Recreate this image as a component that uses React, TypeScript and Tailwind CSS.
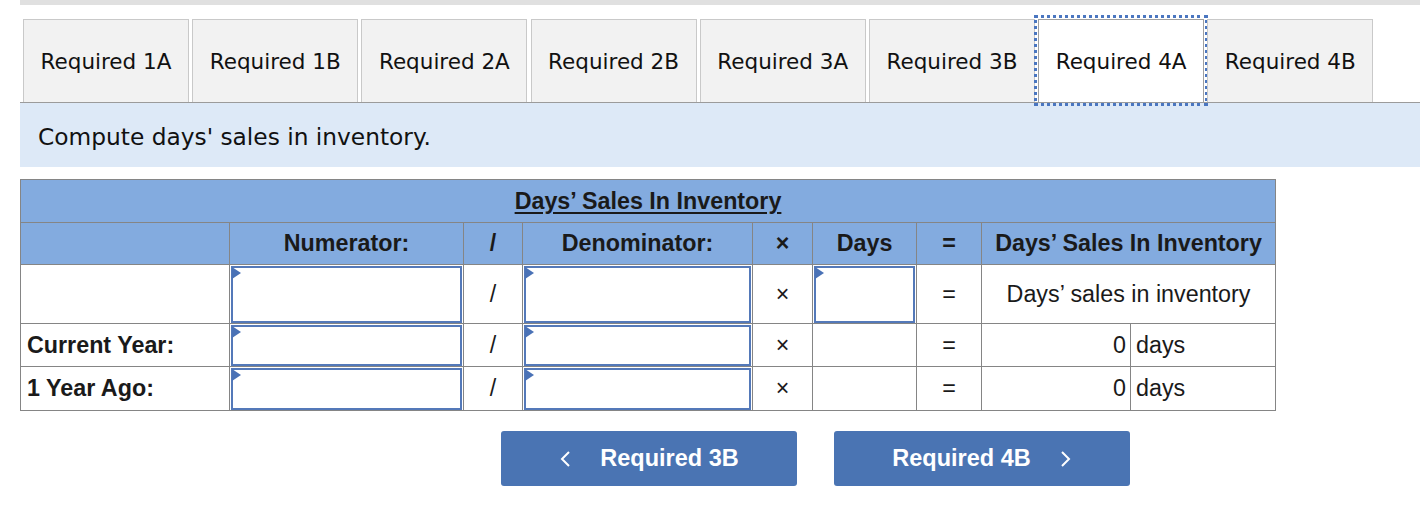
import { Fragment } from "react"

const tabs = [
    "Required 1A",
    "Required 1B",
    "Required 2A",
    "Required 2B",
    "Required 3A",
    "Required 3B",
    "Required 4A",
    "Required 4B",
]

const activeTab = "Required 4A"

function AnswerBox({ height }: { height: string }) {
    return (
        <div className={`relative mx-px border-2 border-[#5479b9] bg-white ${height}`}>
            <span className="absolute -left-[1px] -top-[1px] h-0 w-0 border-y-[6px] border-l-[9px] border-y-transparent border-l-[#4a72b6]" />
        </div>
    )
}

const rows = [
    { label: "Current Year:", value: "0" },
    { label: "1 Year Ago:", value: "0" },
]

export default function App() {
    return (
        <div className="h-[524px] w-[1420px] bg-white pl-[20px] font-['DejaVu_Sans',sans-serif] text-[#111]">
            <div className="h-[5px] bg-[#e0e0e0]" />

            {/* Tabs */}
            <div className="mt-[14px] flex gap-[3.2px] border-b border-[#9b9b9b] pl-[3px]">
                {tabs.map((tab) => {
                    const active = tab === activeTab
                    return (
                        <button
                            key={tab}
                            type="button"
                            className={
                                active
                                    ? "h-[83px] w-[166px] border border-b-0 border-[#a0a0a0] bg-white pt-[2px] text-[21.5px] outline-[3px] outline-offset-[1px] outline-[#4a76c0] outline-dotted"
                                    : "h-[83px] w-[166px] border border-b-0 border-[#c9c9c9] bg-[#f2f2f2] pt-[2px] text-[21.5px]"
                            }
                        >
                            {tab}
                        </button>
                    )
                })}
            </div>

            <div className="flex h-[64px] items-center bg-[#dde9f7] pl-[18px] pt-[4px] text-[23.3px]">
                Compute days&apos; sales in inventory.
            </div>

            {/* Ratio table */}
            <table className="mt-[12px] w-[1255px] table-fixed border-collapse font-['Liberation_Sans',Arial,sans-serif] text-[23.3px] text-[#1a1a1a]">
                <colgroup>
                    <col className="w-[209px]" />
                    <col className="w-[234px]" />
                    <col className="w-[59px]" />
                    <col className="w-[230px]" />
                    <col className="w-[60px]" />
                    <col className="w-[104px]" />
                    <col className="w-[65px]" />
                    <col className="w-[149px]" />
                    <col className="w-[145px]" />
                </colgroup>
                <thead>
                    <tr className="h-[43px] bg-[#83abdf]">
                        <th colSpan={9} className="border border-[#858585] text-center font-bold">
                            <span className="underline underline-offset-[3px]">Days’ Sales In Inventory</span>
                        </th>
                    </tr>
                    <tr className="h-[42px] bg-[#83abdf] font-bold">
                        <th className="border border-[#858585]" />
                        <th className="border border-[#858585]">Numerator:</th>
                        <th className="border border-[#858585]">/</th>
                        <th className="border border-[#858585]">Denominator:</th>
                        <th className="border border-[#858585]">×</th>
                        <th className="border border-[#858585]">Days</th>
                        <th className="border border-[#858585]">=</th>
                        <th colSpan={2} className="border border-[#858585]">
                            Days’ Sales In Inventory
                        </th>
                    </tr>
                </thead>
                <tbody>
                    <tr className="h-[59px]">
                        <td className="border border-[#858585]" />
                        <td className="border border-[#858585] p-0">
                            <AnswerBox height="h-[57px]" />
                        </td>
                        <td className="border border-[#858585] text-center">/</td>
                        <td className="border border-[#858585] p-0">
                            <AnswerBox height="h-[57px]" />
                        </td>
                        <td className="border border-[#858585] text-center">×</td>
                        <td className="border border-[#858585] p-0">
                            <AnswerBox height="h-[57px]" />
                        </td>
                        <td className="border border-[#858585] text-center">=</td>
                        <td colSpan={2} className="border border-[#858585] text-center">
                            Days’ sales in inventory
                        </td>
                    </tr>
                    {rows.map((row, i) => (
                        <Fragment key={row.label}>
                            <tr className={i === 0 ? "h-[43px]" : "h-[44px]"}>
                                <td className="border border-[#858585] pl-[6px] font-bold">{row.label}</td>
                                <td className="border border-[#858585] p-0">
                                    <AnswerBox height={i === 0 ? "h-[41px]" : "h-[42px]"} />
                                </td>
                                <td className="border border-[#858585] text-center">/</td>
                                <td className="border border-[#858585] p-0">
                                    <AnswerBox height={i === 0 ? "h-[41px]" : "h-[42px]"} />
                                </td>
                                <td className="border border-[#858585] text-center">×</td>
                                <td className="border border-[#858585]" />
                                <td className="border border-[#858585] text-center">=</td>
                                <td className="border border-[#858585] pr-[4px] text-right">{row.value}</td>
                                <td className="border border-[#858585] pl-[5px]">days</td>
                            </tr>
                        </Fragment>
                    ))}
                </tbody>
            </table>

            {/* Navigation */}
            <div className="ml-[481px] mt-[20px] flex gap-[37px] font-['Liberation_Sans',Arial,sans-serif] text-[23.5px] font-bold text-white">
                <button
                    type="button"
                    className="flex h-[55px] w-[296px] items-center justify-center gap-[28px] rounded-[3px] bg-[#4a74b3]"
                >
                    <svg width="13" height="16" viewBox="0 0 13 16" fill="none" stroke="white" strokeWidth="2">
                        <path d="M10 1 3 8l7 7" />
                    </svg>
                    <span>Required 3B</span>
                </button>
                <button
                    type="button"
                    className="flex h-[55px] w-[296px] items-center justify-center gap-[28px] rounded-[3px] bg-[#4a74b3]"
                >
                    <span>Required 4B</span>
                    <svg width="13" height="16" viewBox="0 0 13 16" fill="none" stroke="white" strokeWidth="2">
                        <path d="m3 1 7 7-7 7" />
                    </svg>
                </button>
            </div>
        </div>
    )
}
